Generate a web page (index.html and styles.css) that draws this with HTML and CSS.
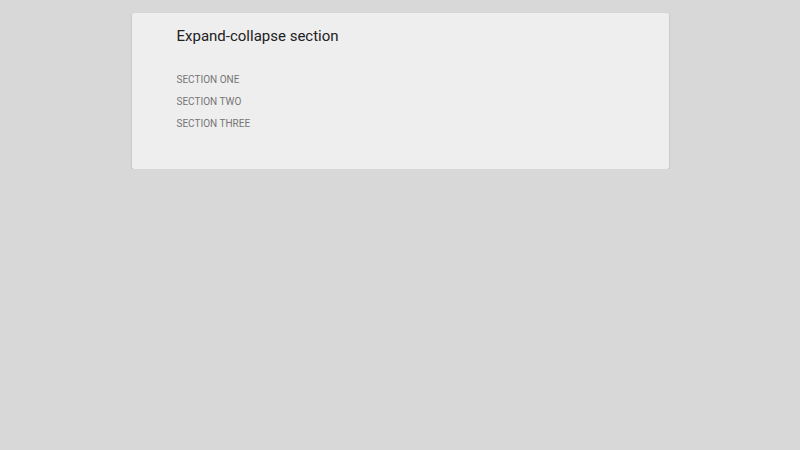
FILE: index.html
```html
<!DOCTYPE html>
<html>
<head>
<meta charset="utf-8">
<link rel="stylesheet" href="styles.css">
</head>
<body>
<div class="card">
  <h1 class="title">Expand-collapse section</h1>
  <ul class="sections">
    <li>SECTION ONE</li>
    <li>SECTION TWO</li>
    <li>SECTION THREE</li>
  </ul>
</div>
</body>
</html>
```
FILE: styles.css
```css
html, body {
  margin: 0;
  padding: 0;
  background: #d8d8d8;
  font-family: Roboto, "Liberation Sans", sans-serif;
}
.card {
  width: 537px;
  margin: 13px auto 0;
  box-sizing: border-box;
  padding: 13px 45px 34px;
  background: #eeeeee;
  border-radius: 2px;
  box-shadow: 0 1px 2px rgba(0,0,0,0.22);
}
.title {
  margin: 0;
  font-size: 15px;
  font-weight: 400;
  line-height: 20px;
  color: #212121;
}
.sections {
  list-style: none;
  margin: 23px 0 0;
  padding: 0;
}
.sections li {
  font-size: 10px;
  line-height: 22px;
  color: #757575;
}
```
